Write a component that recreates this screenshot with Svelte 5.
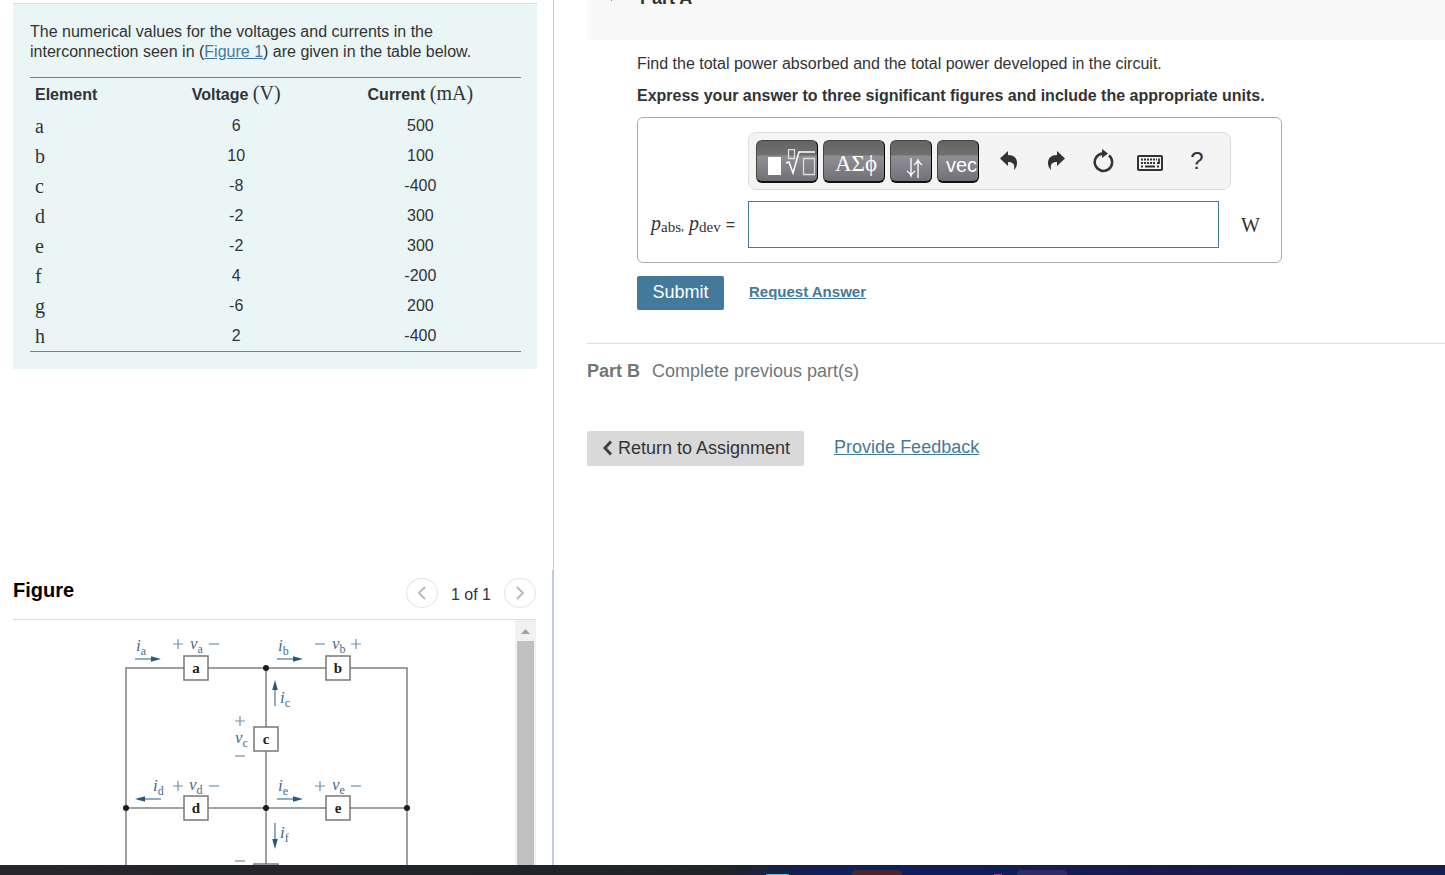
<script lang="ts">
	let answer = $state('');

	const rows = [
		{ element: 'a', voltage: '6', current: '500' },
		{ element: 'b', voltage: '10', current: '100' },
		{ element: 'c', voltage: '-8', current: '-400' },
		{ element: 'd', voltage: '-2', current: '300' },
		{ element: 'e', voltage: '-2', current: '300' },
		{ element: 'f', voltage: '4', current: '-200' },
		{ element: 'g', voltage: '-6', current: '200' },
		{ element: 'h', voltage: '2', current: '-400' }
	];

	// element boxes in the circuit, by centre point
	const boxes = [
		{ name: 'a', x: 183, y: 48 },
		{ name: 'b', x: 325, y: 48 },
		{ name: 'c', x: 253, y: 119 },
		{ name: 'd', x: 183, y: 188 },
		{ name: 'e', x: 325, y: 188 },
		{ name: '', x: 253, y: 256 }
	];

	const nodes = [
		{ x: 253, y: 48 },
		{ x: 113, y: 188 },
		{ x: 253, y: 188 },
		{ x: 394, y: 188 }
	];

	const labels = [
		{ letter: 'i', sub: 'a', x: 123, y: 31 },
		{ letter: 'v', sub: 'a', x: 177, y: 29 },
		{ letter: 'i', sub: 'b', x: 265, y: 31 },
		{ letter: 'v', sub: 'b', x: 319, y: 29 },
		{ letter: 'i', sub: 'c', x: 267, y: 83 },
		{ letter: 'v', sub: 'c', x: 222, y: 123 },
		{ letter: 'i', sub: 'd', x: 140, y: 171 },
		{ letter: 'v', sub: 'd', x: 176, y: 170 },
		{ letter: 'i', sub: 'e', x: 265, y: 171 },
		{ letter: 'v', sub: 'e', x: 319, y: 170 },
		{ letter: 'i', sub: 'f', x: 267, y: 218 }
	];

	const arrows = [
		{ x: 122, y: 39, angle: 0 },
		{ x: 264, y: 39, angle: 0 },
		{ x: 262, y: 86, angle: -90 },
		{ x: 148, y: 179, angle: 180 },
		{ x: 264, y: 179, angle: 0 },
		{ x: 262, y: 203, angle: 90 }
	];

	const plus = [[165, 24], [343, 24], [227, 101], [165, 166], [307, 166]];
	const minus = [[201, 24], [307, 24], [227, 136], [201, 166], [343, 166], [227, 241]];
</script>

<svelte:head>
	<title>Part A</title>
</svelte:head>

<div class="screen">
	<div class="page">
		<aside class="left">
			<section class="problem">
				<div class="panel">
					<p>
						The numerical values for the voltages and currents in the interconnection seen in
						(<a href="#figure">Figure 1</a>) are given in the table below.
					</p>
					<table>
						<thead>
							<tr>
								<th class="name">Element</th>
								<th>Voltage <span class="math">(V)</span></th>
								<th>Current <span class="math">(mA)</span></th>
							</tr>
						</thead>
						<tbody>
							{#each rows as row}
								<tr>
									<td class="name math">{row.element}</td>
									<td>{row.voltage}</td>
									<td>{row.current}</td>
								</tr>
							{/each}
						</tbody>
					</table>
				</div>
			</section>

			<section class="figure" id="figure">
				<header class="figure-head">
					<h2>Figure</h2>
					<div class="pager">
						<button aria-label="Previous figure">
							<svg width="10" height="16" viewBox="0 0 10 16"><path d="M8 2 2 8l6 6" /></svg>
						</button>
						<span>1 of 1</span>
						<button aria-label="Next figure">
							<svg width="10" height="16" viewBox="0 0 10 16"><path d="m2 2 6 6-6 6" /></svg>
						</button>
					</div>
				</header>
				<div class="viewer">
					<svg class="circuit" width="420" height="300" viewBox="0 0 420 300">
						<g class="wire">
							<path d="M113 300V48H394V300M113 188H394M253 48V300" />
						</g>
						{#each nodes as node}
							<circle cx={node.x} cy={node.y} r="3" fill="#1c1c1c" />
						{/each}
						{#each boxes as box}
							<rect class="box" x={box.x - 12} y={box.y - 12} width="24" height="24" />
							{#if box.name}
								<text class="box-name" x={box.x} y={box.y + 5}>{box.name}</text>
							{/if}
						{/each}
						{#each labels as label}
							<text class="label" x={label.x} y={label.y}>{label.letter}<tspan class="sub" dy="4">{label.sub}</tspan></text>
						{/each}
						{#each arrows as arrow}
							<g transform="translate({arrow.x} {arrow.y}) rotate({arrow.angle})">
								<path d="M0 0H18" stroke="#54809f" stroke-width="1.3" />
								<path d="M16-2.8 26 0 16 2.8z" fill="#28587e" />
							</g>
						{/each}
						{#each plus as [x, y]}
							<path class="sign" d="M{x - 5} {y}h10M{x} {y - 5}v10" />
						{/each}
						{#each minus as [x, y]}
							<path class="sign" d="M{x - 5} {y}h10" />
						{/each}
					</svg>
					<div class="scrollbar">
						<svg width="9" height="5" viewBox="0 0 9 5"><path d="M0 5 4.5 0 9 5z" fill="#a3a3a3" /></svg>
						<div class="thumb"></div>
					</div>
				</div>
			</section>
		</aside>

		<main class="right">
			<header class="part-head">
				<svg width="9" height="8" viewBox="0 0 9 8"><path d="M0 0h9L4.5 8z" fill="#333" /></svg>
				<h2>Part A</h2>
			</header>

			<div class="part-body">
				<p>Find the total power absorbed and the total power developed in the circuit.</p>
				<p><b>Express your answer to three significant figures and include the appropriate units.</b></p>

				<form class="answer" onsubmit={(e) => e.preventDefault()}>
					<div class="toolbar">
						<button type="button" class="key wide" aria-label="Templates">
							<svg width="48" height="28" viewBox="0 0 48 28" fill="none" stroke="#fff">
								<path d="M1 8h13v18H1z" fill="#fff" stroke="none" />
								<path d="M21.5.5h6v9h-6zM36.5 9.500h11v16h-11z" stroke="#ddd" stroke-width="1.3" />
								<path d="M19 14l3-1 4 11 6-21h16" stroke-width="1.5" />
							</svg>
						</button>
						<button type="button" class="key wide symbols">ΑΣϕ</button>
						<button type="button" class="key arrows" aria-label="Arrows">
							<svg width="18" height="20" viewBox="0 0 18 20" fill="none" stroke="#fff" stroke-width="1.3">
								<path d="M5 0v18M1 13q3 2 4 5 1-3 4-5M12 20V2M8 7q3-2 4-5 1 3 4 5" />
							</svg>
						</button>
						<button type="button" class="key vec">vec</button>
						<div class="tools">
							<button type="button" class="tool" aria-label="Undo">
								<svg width="18" height="20" viewBox="0 0 18 20">
									<path d="M0 7.5 8 0v4c6 0 9 3 9 8 0 3-1 5-3 7 1-6-1-8-6-8v4z" fill="#333" />
								</svg>
							</button>
							<button type="button" class="tool" aria-label="Redo">
								<svg width="18" height="20" viewBox="0 0 18 20">
									<path d="M18 7.5 10 0v4C4 4 1 7 1 12c0 3 1 5 3 7-1-6 1-8 6-8v4z" fill="#333" />
								</svg>
							</button>
							<button type="button" class="tool" aria-label="Reset">
								<svg width="22" height="24" viewBox="0 0 22 24">
									<path d="M17 6.5A8.7 8.700 0 1 1 11 4.500" fill="none" stroke="#333" stroke-width="2.5" />
									<path d="M10 0v9l6-4.500z" fill="#333" />
								</svg>
							</button>
							<button type="button" class="tool" aria-label="Keyboard shortcuts">
								<svg width="26" height="24" viewBox="0 0 26 24" fill="none" stroke="#333">
									<rect x="1" y="7" width="24" height="14" rx="1" stroke-width="2" />
									<path d="M4 10.500h16M4 14h15M4 17.500h2M20 17.500h2" stroke-width="1.8" stroke-dasharray="2 1" />
									<path d="M8 17.500h10M22 9.500v4.500h-2" stroke-width="1.8" />
								</svg>
							</button>
							<button type="button" class="tool help" aria-label="Help">?</button>
						</div>
					</div>
					<label for="answer"><i>p</i><sub>abs</sub><small>,</small> <i>p</i><sub>dev</sub> <span>=</span></label>
					<input id="answer" type="text" bind:value={answer} />
					<span class="unit">W</span>
				</form>

				<div class="actions">
					<button class="submit">Submit</button>
					<a href="#answer">Request Answer</a>
				</div>
			</div>

			<div class="part-b"><b>Part B</b>Complete previous part(s)</div>

			<footer>
				<button class="return">
					<svg width="11" height="16" viewBox="0 0 11 16"><path d="M9 1.5 3 8l6 6.5" /></svg>
					Return to Assignment
				</button>
				<a href="#feedback">Provide Feedback</a>
			</footer>
		</main>
	</div>

	<div class="taskbar">
		<svg width="100%" height="10" viewBox="0 0 1445 10" preserveAspectRatio="none">
			<rect x="766" y="9" width="23" height="4" rx="1" fill="#4fc3f7" />
			<rect x="852" y="5" width="50" height="10" rx="4" fill="#4a262c" />
			<rect x="994" y="9" width="8" height="4" fill="#a3389c" />
			<rect x="1017" y="5" width="50" height="10" rx="4" fill="#2b2d62" />
		</svg>
	</div>
</div>

<style>
	:global(body) {
		margin: 0;
		background: #fff;
		color: #333;
		font: 16px/20px 'Liberation Sans', Arial, sans-serif;
	}

	.screen {
		display: flex;
		flex-direction: column;
		height: 100vh;
		overflow: hidden;
	}

	.page {
		flex: 1;
		min-height: 0;
		display: grid;
		grid-template-columns: minmax(0, 554px) minmax(0, 1fr);
	}

	p,
	h2 {
		margin: 0;
	}

	button {
		font: inherit;
		color: inherit;
		border: 0;
		padding: 0;
		cursor: pointer;
	}

	a {
		color: #437a9c;
	}

	.math {
		font-family: 'Liberation Serif', 'Times New Roman', serif;
		font-size: 20px;
		font-weight: 400;
	}

	.left {
		display: flex;
		flex-direction: column;
		min-height: 0;
	}

	.problem {
		flex: 0 0 567px;
		padding: 3px 16px 0 13px;
		border-right: 1px solid #c8ccd2;
	}

	.panel {
		padding: 18px 16px 17px 17px;
		border-top: 1px solid #ddd;
		background: #eaf6f6;
	}

	.panel p {
		margin-bottom: 15px;
	}

	table {
		width: 100%;
		table-layout: fixed;
		border-collapse: separate;
		border-spacing: 0;
		border: solid #6f8f45;
		border-width: 1px 0;
	}

	th,
	td {
		box-sizing: border-box;
		height: 30px;
		padding: 0;
		text-align: center;
	}

	th {
		height: 33px;
		width: 34%;
		padding-bottom: 2px;
	}

	th:last-child {
		width: 41%;
	}

	th.name {
		width: 25%;
		padding-bottom: 0;
	}

	.name {
		padding-left: 5px;
		text-align: left;
	}

	.figure {
		flex: 1;
		min-height: 0;
		display: flex;
		flex-direction: column;
		padding: 0 16px 0 13px;
		border-right: 2px solid #c2cee0;
	}

	.figure-head {
		display: flex;
		justify-content: space-between;
		align-items: center;
		height: 49px;
		border-bottom: 1px solid #ddd;
		flex: none;
	}

	.figure-head h2 {
		font-size: 20px;
		line-height: 32px;
		margin-bottom: 10px;
		color: #000;
	}

	.pager {
		display: flex;
		align-items: center;
		gap: 13px;
		margin-bottom: 4px;
	}

	.pager button {
		display: grid;
		place-items: center;
		width: 32px;
		height: 30px;
		box-sizing: border-box;
		border: 1px solid #e3e3e3;
		border-radius: 50%;
		background: #fff;
	}

	.pager path {
		fill: none;
		stroke: #bbb;
		stroke-width: 2;
	}

	.pager span {
		padding-top: 4px;
	}

	.viewer {
		flex: 1;
		min-height: 0;
		display: flex;
		justify-content: space-between;
		overflow: hidden;
	}

	.circuit {
		flex: none;
		font-family: 'Liberation Serif', 'Times New Roman', serif;
	}

	.wire path {
		fill: none;
		stroke: #808080;
		stroke-width: 1.5;
	}

	.box {
		fill: #fff;
		stroke: #777;
		stroke-width: 1.5;
	}

	.box-name {
		font-size: 15px;
		font-weight: 700;
		text-anchor: middle;
		fill: #222;
	}

	.label {
		font-size: 17px;
		font-style: italic;
		fill: #3f6d8e;
	}

	.sub {
		font-size: 12px;
		font-style: normal;
	}

	.sign {
		stroke: #6b93ad;
		stroke-width: 1.2;
	}

	.scrollbar {
		width: 21px;
		display: flex;
		flex-direction: column;
		align-items: center;
		background: #f1f1f1;
	}

	.scrollbar svg {
		flex: none;
		margin: 9px 0 7px;
	}

	.thumb {
		flex: 1;
		width: 17px;
		background: #c1c1c1;
	}

	.right {
		padding-left: 33px;
		overflow: hidden;
	}

	.part-head {
		display: flex;
		gap: 24px;
		height: 40px;
		padding-left: 20px;
		background: #f9f9f9;
	}

	.part-head svg {
		flex: none;
		margin-top: -7px;
	}

	.part-head h2 {
		margin-top: -12px;
		font-size: 18px;
		line-height: 20px;
	}

	.part-body {
		padding: 14px 50px 33px;
		border-bottom: 1px solid #ddd;
	}

	.part-body p {
		margin-bottom: 12px;
	}

	.part-body p + p {
		margin-bottom: 11px;
	}

	.answer {
		display: grid;
		grid-template-columns: 97px minmax(0, 471px) minmax(40px, 1fr);
		row-gap: 11px;
		align-items: center;
		max-width: 617px;
		padding: 14px 13px;
		border: 1px solid #aaa;
		border-radius: 6px;
	}

	.toolbar {
		grid-column: 2 / 4;
		justify-self: start;
		display: flex;
		align-items: center;
		gap: 5px;
		padding: 6px 12px 6px 7px;
		height: 44px;
		border: 1px solid #ddd;
		border-radius: 8px;
		background: #f4f4f4;
	}

	.key {
		box-sizing: border-box;
		display: flex;
		align-items: flex-end;
		justify-content: flex-end;
		width: 42px;
		height: 43px;
		padding: 0 2px 4px 0;
		border: 1px solid #444;
		border-right-color: #000;
		border-bottom: 2px solid #111;
		border-radius: 6px;
		background: linear-gradient(#646464 0, #707070 14px, #918f96 15px, #717076 100%);
		color: #fff;
		overflow: hidden;
	}

	.key.wide {
		width: 62px;
	}

	.key.arrows {
		padding: 0 7px 3px 0;
	}

	.key.symbols {
		padding: 0 7px 5px 0;
		font-family: 'Liberation Serif', 'Times New Roman', serif;
		font-size: 23px;
		line-height: 24px;
	}

	.key.vec {
		padding-right: 1px;
		font-size: 20px;
		line-height: 24px;
	}

	.tools {
		display: flex;
		gap: 5px;
		margin-left: 4px;
	}

	.tool {
		display: grid;
		place-items: center;
		width: 42px;
		height: 42px;
		background: none;
		color: #333;
	}

	.help {
		font-size: 24px;
	}

	label {
		font-family: 'Liberation Serif', 'Times New Roman', serif;
		font-size: 20px;
		white-space: nowrap;
	}

	label sub {
		font-size: 15px;
		line-height: 0;
		vertical-align: -2px;
	}

	label small {
		font-size: 12px;
	}

	label span {
		font: 16px 'Liberation Sans', Arial, sans-serif;
	}

	input {
		box-sizing: border-box;
		width: 100%;
		height: 47px;
		padding: 0 8px;
		border: 1px solid #437a9c;
		font: inherit;
	}

	input:focus {
		outline: none;
	}

	.unit {
		padding-left: 22px;
		font-family: 'Liberation Serif', 'Times New Roman', serif;
		font-size: 20px;
	}

	.actions {
		display: flex;
		align-items: center;
		gap: 25px;
		margin-top: 13px;
	}

	.actions a {
		padding-bottom: 2px;
		font-size: 15px;
		font-weight: 700;
	}

	.submit {
		width: 87px;
		height: 34px;
		padding-bottom: 2px;
		border-radius: 2px;
		background: #437a9c;
		color: #fff;
		font-size: 18px;
	}

	.part-b {
		padding: 17px 0 50px;
		color: #6f7777;
		font-size: 18px;
	}

	.part-b b {
		margin-right: 12px;
	}

	footer {
		display: flex;
		align-items: center;
		gap: 30px;
		font-size: 18px;
	}

	footer a {
		padding-bottom: 4px;
	}

	.return {
		display: flex;
		align-items: center;
		gap: 5px;
		height: 35px;
		padding: 0 14px 2px 15px;
		border-radius: 2px;
		background: #d9d9d9;
	}

	.return path {
		fill: none;
		stroke: #444;
		stroke-width: 3;
	}

	.taskbar {
		flex: none;
		height: 10px;
		background: linear-gradient(90deg, #26262c 0, #212328 50%, #10205a 57%, #0f1e5c 68%, #19194a 80%, #16204f 100%);
	}

	.taskbar svg {
		display: block;
	}
</style>
